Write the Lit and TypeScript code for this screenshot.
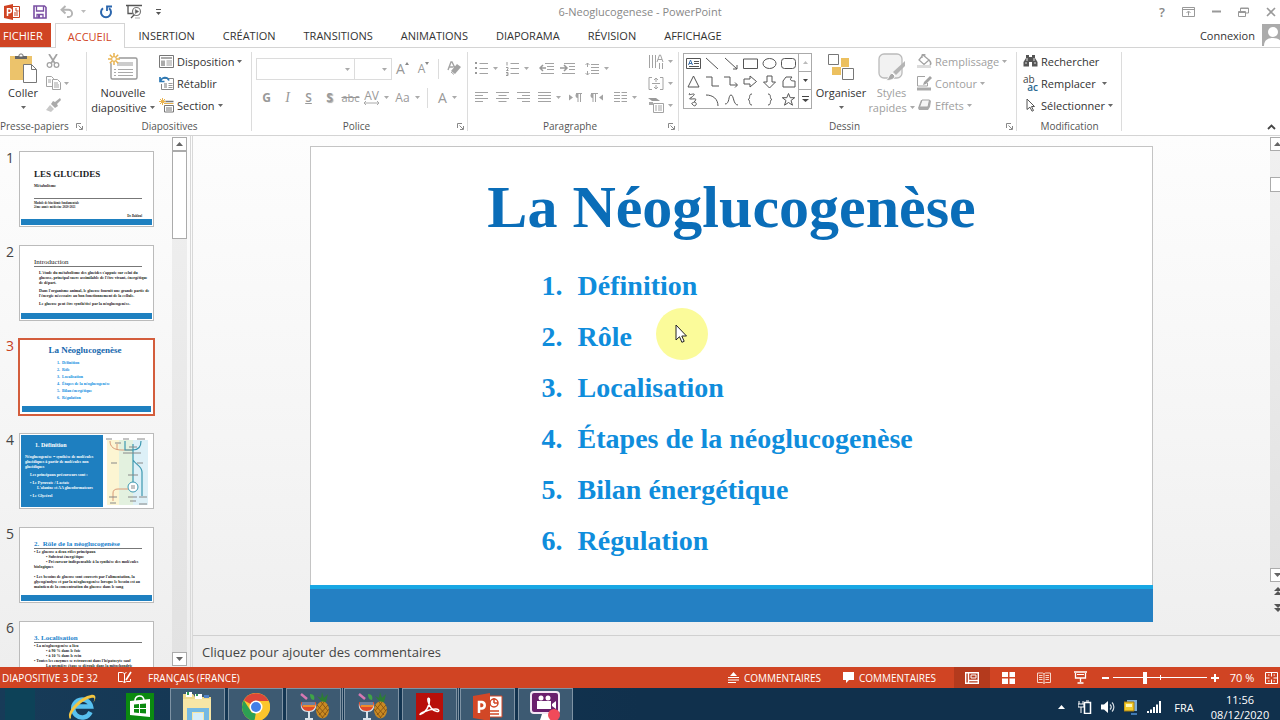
import { LitElement, html, css, svg, TemplateResult, SVGTemplateResult } from "lit";
import { customElement, state } from "lit/decorators.js";
import { classMap } from "lit/directives/class-map.js";

const icon = (w: number, h: number, body: SVGTemplateResult) =>
  html`<svg width=${w} height=${h} viewBox="0 0 ${w} ${h}" fill="none" aria-hidden="true">${body}</svg>`;

const caret = (c = "#666") => icon(5, 3, svg`<path d="M0 0h5L2.500 3z" fill=${c} />`);
const launcher = icon(7, 7, svg`<path d="M.5 5V.5H5M2.500 2.500L6 6M6.500 3v3.500H3" stroke="#888" />`);

const G = "#a3a3a3";

const I = {
  ppt: icon(16, 16, svg`<path d="M8 2.500h7.500v11H8z" fill="#fff" stroke="#c8411f" /><path d="M10 9h4M10 11h4M12 4v3h2.500" stroke="#c8411f" /><path d="M0 2l9-2v16l-9-2z" fill="#d04423" /><path d="M3.500 12V4.800h1.800a1.900 1.900 0 010 4H3.500" stroke="#fff" stroke-width="1.500" />`),
  save: icon(14, 14, svg`<path d="M1 1h10.500L13 2.500V13H1z" stroke="#7a4fa3" stroke-width="1.600" /><path d="M3.500 1v5h7V1M4 13V9.500h6V13" stroke="#7a4fa3" stroke-width="1.300" /><path d="M5 10h2v3H5z" fill="#7a4fa3" />`),
  undo: icon(14, 13, svg`<path d="M5.500 1L1.500 4.800l4 3.700M2 4.800h6.500a3.600 3.600 0 010 7.200H7" stroke="#b4b4b4" stroke-width="1.900" />`),
  redo: icon(14, 14, svg`<path d="M4 3.200A5 5 0 1 0 10 3.200" stroke="#2b66ad" stroke-width="2" /><path d="M8 6V1.500h5" stroke="#2b66ad" stroke-width="1.800" />`),
  show: icon(17, 15, svg`<path d="M0 1.500h16M2 2v7.500h5M5 14l3-3M8 10v2" stroke="#555" stroke-width="1.300" /><circle cx="10.500" cy="7.500" r="4" fill="#fff" stroke="#777" stroke-width="1.200" /><path d="M9.300 5.500l3.400 2-3.400 2zM9 14h5" fill="#555" stroke="#777" stroke-width=".6" />`),
  more: icon(5, 6, svg`<path d="M0 .5h5" stroke="#555" /><path d="M0 3h5L2.500 6z" fill="#555" />`),
  ribbonOpts: icon(13, 10, svg`<path d="M.5.5h12v9H.5zM.5 2.500h12M6.500 8.500V4.500M4.500 6l2-2 2 2" stroke="#999" />`),
  min: icon(9, 3, svg`<path d="M0 1.500h9" stroke="#999" stroke-width="2" />`),
  restore: icon(11, 10, svg`<path d="M.5 4.500h7v5h-7zM2.500 4V1h8v5H8M.5 5.500h7M2.500 1.500h8" stroke="#999" />`),
  close: icon(10, 10, svg`<path d="M1 1l8 8M9 1L1 9" stroke="#999" stroke-width="1.600" />`),
  user: icon(18, 22, svg`<path d="M0 0h18v22H0z" fill="#ababab" /><circle cx="11" cy="8" r="5" fill="#fff" /><path d="M2 22c0-6 4-8 9-8s9 2 9 8z" fill="#fff" />`),
  paste: icon(28, 30, svg`<path d="M1 3h22v24H1z" fill="#ecc36b" /><path d="M6 6V3h3.500a2.500 2.500 0 015 0H18v3z" fill="#666" /><path d="M10.500 1.500h3v2h-3z" fill="#fff" /><path d="M14.500 11.500h8l5 5v13h-13zM22.500 11.500v5h5" fill="#fff" stroke="#777" />`),
  cut: icon(14, 14, svg`<path d="M3 0l6 9.500M11 0L5 9.500" stroke=${G} stroke-width="1.700" /><circle cx="3.500" cy="11" r="2.300" stroke=${G} stroke-width="1.300" /><circle cx="10.500" cy="11" r="2.300" stroke=${G} stroke-width="1.300" />`),
  copy: icon(15, 14, svg`<path d="M.5.5h5l2 2v8h-7z" stroke=${G} /><path d="M6.500 3.500h5l3 3v7h-8zM8 7h4M8 9h5M8 11h5M2 4h3M2 6h3" fill="#fff" stroke=${G} />`),
  brush: icon(15, 14, svg`<path d="M14 0l-5 4-2-1-2 3 4 4 3-2-1-2 4-4z" fill="#aaa" /><path d="M4 7l4 4-3 3-5-2z" fill="#c8c8c8" />`),
  newSlide: icon(30, 28, svg`<rect x="3" y="5" width="26" height="21" rx="1.500" fill="#fff" stroke="#999" stroke-width="1.400" /><path d="M9 9h16v4H9z" fill="#ccc" /><path d="M6 16.500h2M10 16.500h15M6 19.500h2M10 19.500h15M6 22.500h2M10 22.500h15" stroke="#aaa" /><circle cx="6" cy="6" r="5" fill="#fff" /><path d="M6 0v12M0 6h12M1.800 1.800l8.400 8.400M10.200 1.800l-8.400 8.400" stroke="#e9b24d" stroke-width="1.500" /><circle cx="6" cy="6" r="2.300" fill="#fff" stroke="#e9b24d" />`),
  layout: icon(15, 13, svg`<path d="M.5.5h14v12H.5z" stroke="#777" /><path d="M2 2h11v2H2zM2 5.500h4v5.500H2z" fill="#aaa" /><path d="M7.500 6h5.500M7.500 8h5.500M7.500 10h5.500" stroke="#999" />`),
  reset: icon(15, 14, svg`<path d="M4 2.500h10.500v11H2.500V8" stroke="#888" /><path d="M5 7h3v5H5z" fill="#bbb" /><path d="M9.500 7.500h4M9.500 9.500h4M9.500 11.500h4" stroke="#999" /><path d="M1 1v4.500h4.500M1.500 5C3 1 8 0 10 4.500" stroke="#2b78b5" stroke-width="1.700" />`),
  section: icon(15, 15, svg`<path d="M5 3.500h9.500" stroke="#777" stroke-width="1.500" /><path d="M5 5.500h9.500" stroke="#e9b24d" /><path d="M5.500 7.500h9v6.500h-9zM7 10h6M7 12h6" stroke="#777" /><path d="M3.500 0v7M0 3.500h7M1 1l5 5M6 1L1 6" stroke="#e9b24d" />`),
  eraser: icon(14, 15, svg`<path d="M1 9L4 1h1l3 6M2.500 6h4" stroke=${G} stroke-width="1.400" /><path d="M10 3l4 3-6 7-4-3z" fill=${G} /><path d="M4 11l3 2.500" stroke=${G} />`),
  bullets: icon(13, 13, svg`<path d="M0 0h2v2H0zM0 5h2v2H0zM0 10h2v2H0z" fill="#999" /><path d="M4.500 1.500H13M4.500 6.500H13M4.500 11.500H13" stroke=${G} />`),
  numbering: icon(13, 14, svg`<path d="M1 0v3.500M0 5.500h2v1.500L.5 8.500h2M0 10.500h2v3H0M.5 12h1.500" stroke="#999" /><path d="M4.500 1.500H13M4.500 6.500H13M4.500 11.500H13" stroke=${G} />`),
  outdent: icon(15, 11, svg`<path d="M6 .5h9M8 3.500h7M8 6.500h7M2 10.500h13" stroke=${G} /><path d="M7 5H1M4 2L1 5l3 3" stroke="#999" stroke-width="1.500" />`),
  indent: icon(15, 11, svg`<path d="M4 .5h11M9 3.500h6M9 6.500h6M2 10.500h13" stroke=${G} /><path d="M0 5h6M4 2l3 3-3 3" stroke="#999" stroke-width="1.500" />`),
  spacing: icon(14, 14, svg`<path d="M2.500 1v4M.5 3l2-2 2 2M2.500 13V9M.5 11l2 2 2-2M6 2.500h8M6 5.500h8M6 8.500h8M6 11.500h8" stroke=${G} />`),
  left: icon(13, 11, svg`<path d="M0 .5h13M0 3.500h8M0 6.500h13M0 9.500h8" stroke=${G} />`),
  center: icon(13, 11, svg`<path d="M0 .5h13M2.500 3.500h8M0 6.500h13M2.500 9.500h8" stroke=${G} />`),
  right: icon(13, 11, svg`<path d="M0 .5h13M5 3.500h8M0 6.500h13M5 9.500h8" stroke=${G} />`),
  justify: icon(13, 11, svg`<path d="M0 .5h13M0 3.500h13M0 6.500h13M0 9.500h13" stroke=${G} />`),
  ltr: icon(13, 9, svg`<path d="M0 1.500L4 4.500 0 7.500z" fill=${G} /><path d="M9 0v9M11.500 0v9M7 .5h6" stroke=${G} /><path d="M9 0a2.500 2.500 0 000 5z" fill=${G} />`),
  rtl: icon(13, 9, svg`<path d="M13 1.500L9 4.500l4 3z" fill=${G} /><path d="M3 0v9M5.500 0v9M1 .5h7" stroke=${G} /><path d="M3 0a2.500 2.500 0 000 5z" fill=${G} />`),
  columns: icon(13, 11, svg`<path d="M0 .5h6M7.500 .5H13M0 3.500h6M7.500 3.500H13M0 6.500h6M7.500 6.500H13M0 9.500h6M7.500 9.500H13" stroke=${G} />`),
  textDir: icon(16, 15, svg`<path d="M1.500 1v13M4.500 1v13M7.500 1v13M11.500 9v6M14.500 9v6M9 8l2.500-7h1L15 8M10 5.500h4" stroke=${G} />`),
  alignText: icon(16, 15, svg`<path d="M4 1.500H1v12h3M12 1.500h3v12h-3M4 7.500h8M8 2v4M8 13V9M6 4l2-2 2 2M6 11l2 2 2-2" stroke=${G} />`),
  smartArt: icon(16, 16, svg`<path d="M0 1h8l4 3H4z" fill="#999" /><path d="M1 5h4v3H1z" fill="#aaa" /><path d="M5.500 6.500h10v9h-10zM7 9h2M10 9h4M7 11h2M10 11h4M7 13h2M10 13h4" fill="#fff" stroke=${G} />`),
  organise: icon(28, 28, svg`<path d="M14 5h8v9h-8zM5 14h9v8H5z" fill="#ecc05f" /><path d="M1.500 1.500h10v10h-10zM15.500 15.500h11v11h-11z" fill="#fff" stroke="#777" />`),
  styles: icon(28, 30, svg`<rect x="1" y="1" width="23" height="24" rx="5" fill="#f2f2f2" stroke="#bbb" stroke-width="1.300" /><path d="M27 8v5l-9 9-3-3z" fill="#b5b5b5" /><path d="M14 20l3 3c-1 4-6 5-9 4 3-1 2-5 6-7z" fill="#aaa" stroke="#fff" />`),
  fill: icon(15, 14, svg`<path d="M6 1l6 5-5 4.500L2 6zM5 4V1.500a1.500 1.500 0 013 0" stroke=${G} stroke-width="1.300" /><path d="M12 6c2 2 2 4 1 5" stroke=${G} stroke-width="1.500" /><path d="M0 11h14v3H0z" fill="#dcdcdc" />`),
  outline: icon(15, 15, svg`<path d="M8 .5H.5v9.500h10V7" stroke=${G} /><path d="M13 0l2 2-6 6-3 1 1-3z" fill=${G} /><path d="M0 11.500h14v3H0z" fill="#aaa" />`),
  effects: icon(15, 12, svg`<path d="M4 1h9l1 1-1 6-2 3H2L1 9z" fill="#aaa" /><path d="M5 1h7.500L11 8H2.500z" fill="#f5f5f5" stroke=${G} />`),
  find: icon(15, 12, svg`<path d="M3 0h3v2h3V0h3v3l2.500 4v4.500H9V7H6v4.500H.5V7L3 3z" fill="#555" /><path d="M2 8h2M11 8h2M4 3v3M11 3v3" stroke="#ddd" />`),
  select: icon(10, 14, svg`<path d="M1 1l7.500 7.500H5.500l2 4-1.500.7-2-4L1 11.500z" stroke="#555" />`),
  up: icon(9, 6, svg`<path d="M1 5l3.500-3.500L8 5" stroke="#444" stroke-width="1.800" />`),
  proof: icon(14, 13, svg`<path d="M.5 1.500h4l2 1v9l-2-1h-4zM6.500 2.500l2-1M6.500 11.500l2-1h4V8" stroke="#fff" /><path d="M13 1L8 9" stroke="#fff" stroke-width="1.600" />`),
  notes: icon(11, 11, svg`<path d="M0 5.500h11M0 8h11M0 10.500h8" stroke="#fff" /><path d="M2 4l3.500-4L9 4z" fill="#fff" />`),
  comment: icon(11, 11, svg`<path d="M0 0h11v8H6l-3 3V8H0z" fill="#fff" />`),
  normal: icon(14, 12, svg`<path d="M.7.7h12.600v10.600H.7zM3.500 1v10M4 8.500h9" stroke="#fff" stroke-width="1.400" /><path d="M6 3h5v3H6z" stroke="#fff" />`),
  sorter: icon(13, 12, svg`<path d="M0 0h6v5H0zM7.500 0h5.500v5H7.500zM0 6.500h6V12H0zM7.500 6.500h5.500V12H7.500z" fill="#fff" />`),
  reading: icon(14, 12, svg`<path d="M.5 1h5l1.500 1 1.500-1h5v9.500h-5L7 11.500l-1.500-1h-5zM7 2v9M2 3.500h3.500M2 5.500h3.500M2 7.500h3.500M8.500 3.500H12M8.500 5.500H12M8.500 7.500H12" stroke="#f5d5cb" />`),
  slideshow: icon(13, 13, svg`<path d="M0 1h13M1.500 2v5h10V2M6.500 7v4M3.500 12h6" stroke="#fff" stroke-width="1.300" /><path d="M3 3.500h7" stroke="#fff" />`),
  fit: icon(13, 12, svg`<path d="M.5.5h12v11H.5zM6.500 1v3.500M6.500 11V7.500M1 6h3.500M12 6H8.500" stroke="#fff" /><path d="M3 3h1.500M8.500 3H10M3 9h1.500M8.500 9H10" stroke="#fff" />`),
  ie: icon(30, 30, svg`<path d="M23.500 20a9 9 0 11.500-5.500H8" stroke="#58c1ef" stroke-width="4.500" /><path d="M3 27C-2 21 12 5 24 3c6-1 5 4 2 8 2-4 2-6-2-5C15 8 3 20 4 26z" fill="#f3c541" />`),
  store: icon(28, 28, svg`<path d="M0 0h28v28H0z" fill="#0b8a10" /><path d="M4 8l20-2v18L4 22z" fill="#fff" /><path d="M9 8c0-6 8-7 9-1" stroke="#fff" stroke-width="1.600" /><path d="M8 11.500l5-.5v4H8zM14 11l6-.5V15h-6zM8 16h5v4l-5-.5zM14 16h6v4.500l-6-.5z" fill="#0b8a10" />`),
  folder: icon(32, 32, svg`<path d="M1 3h10l2 3h16v24H1z" fill="#efd98c" /><path d="M4 1h6v5H4zM13 3h7v5h-7z" fill="#fff" /><path d="M5 1h2v3H5zM14 3h2v2h-2z" fill="#2d9b52" /><path d="M22 4h5v3h-5z" fill="#4f81c7" /><path d="M1 8h28v22H1z" fill="#f7e6a6" /><path d="M5 17h22v15h-5V21H10v11H5z" fill="#74b9e4" /><path d="M11 22h10v8H11z" fill="#d7eefa" />`),
  chrome: icon(28, 28, svg`<circle cx="14" cy="14" r="14" fill="#fbc62d" /><path d="M14 14L1.800 7.200A14 14 0 0126.500 8H14z" fill="#dd4638" /><path d="M1.800 7.200L10 20l4-1-1.500 9A14 14 0 011.800 7.200z" fill="#2da053" /><path d="M12 28l6-11 2-9h6.500A14 14 0 0112 28z" fill="#fbc62d" /><circle cx="14" cy="14" r="6.500" fill="#fff" /><circle cx="14" cy="14" r="5" fill="#437fe8" />`),
  fruit: icon(30, 30, svg`<path d="M2 11h15c1 6-2 9-6 9v6h3v2H6v-2h3v-6C4 20 1 17 2 11z" fill="#d9e3ea" /><path d="M2 10h15c0 6-3 9-7.500 9S2 16 2 10z" fill="#e0492a" /><path d="M3 10h13v4H3z" fill="#6f7f9c" /><path d="M4 13h12v2H4z" fill="#f08a2c" /><path d="M2 2l6 5" stroke="#d678b2" stroke-width="2.500" /><path d="M11 2c4 0 5 3 4 6-3 0-4-3-4-6z" fill="#3fa447" /><path d="M23 10l-5-6 4 2 1-6 2 6 4-4-2 8z" fill="#2c7d35" /><ellipse cx="23.500" cy="18" rx="6.500" ry="8.500" fill="#c98a22" /><path d="M18 13l9 10M17 17l7 9M22 10l7 9M29 13l-9 10M30 17l-7 9M25 10l-7 9" stroke="#7c4d12" stroke-width=".8" />`),
  acrobat: icon(27, 28, svg`<path d="M0 0h27v28H0z" fill="#b80f0a" /><path d="M5 21c4-1 9-8 8.500-14-.2-3-2.300-2-1.500 1 1.500 6 5 10 9 10.500 3 0 2-2.500-1-2.500-5 0-9 1.500-13.500 3.500C4 21 3 22 5 21z" stroke="#fff" stroke-width="1.500" />`),
  pptBig: icon(30, 28, svg`<path d="M14 3h15v21H14z" fill="#fff" stroke="#d24726" /><circle cx="21" cy="10" r="4" stroke="#d24726" stroke-width="1.500" /><path d="M21 10V5M21 10h4M17 18h9M17 21h9" stroke="#d24726" stroke-width="1.500" /><path d="M0 3l17-3v28L0 25z" fill="#d24726" /><path d="M6 20V9h3a3.300 3.300 0 010 6.500H6" stroke="#fff" stroke-width="2.500" />`),
  recorder: icon(32, 32, svg`<rect x="1" y="1" width="28" height="21" rx="3" fill="#6a1f6d" stroke="#f3e6f4" stroke-width="2" /><circle cx="11" cy="7" r="2.500" fill="#fff" /><circle cx="18" cy="7" r="2.500" fill="#fff" /><path d="M7 10h14v8H7zM22 13l4-3v8l-4-3zM12 23h7l2 6H10z" fill="#fff" /><circle cx="24" cy="24" r="6" fill="#f04a5a" />`),
  trayUp: icon(7, 4, svg`<path d="M0 4h7L3.500 0z" fill="#fff" />`),
  battery: icon(14, 14, svg`<path d="M6.500 2.500h6v11h-6z" stroke="#fff" stroke-width="1.500" /><path d="M8 1h3M1 1v3M5 1v3M0 4h6v3H0zM3 7v6" stroke="#fff" />`),
  speaker: icon(14, 14, svg`<path d="M0 4.500h3L7 1v12L3 9.500H0z" fill="#fff" /><path d="M9 4.500c1.500 1.500 1.500 3.500 0 5M11 2.500c2.500 2.500 2.500 6.500 0 9" stroke="#d5dde5" stroke-width="1.200" />`),
  usb: icon(14, 15, svg`<path d="M3 0h10v11H3z" fill="#7eaed8" /><path d="M0 2h10v9H0z" fill="#f2cb2a" stroke="#a87d0e" /><path d="M2 4h6v3H2z" fill="#fff7b8" /><path d="M7 14h6" stroke="#4f92d6" stroke-width="1.500" />`),
  signal: icon(14, 12, svg`<path d="M1 10v2M4 8.500V12M7 6v6M10 3.500V12M13 0v12" stroke="#fff" stroke-width="2" />`),
};

const shapes: SVGTemplateResult[] = [
  svg`<path d="M.5 2.500h14v10H.5zM8 5.500h5M8 7.500h5M3 10.500h10" /><path d="M2.500 9l2-5 2 5M3 7.500h3" stroke="#3a6ea8" />`,
  svg`<path d="M1 2l12 11" />`,
  svg`<path d="M1 2l12 11M13 9v4H9" />`,
  svg`<path d="M.5 3h14v9.500H.5z" />`,
  svg`<ellipse cx="7.500" cy="7.500" rx="6.500" ry="5" />`,
  svg`<rect x=".5" y="2.500" width="14" height="10" rx="3" />`,
  svg`<path d="M7.500 2l5.500 11H2z" />`,
  svg`<path d="M1 3h6v9h7" />`,
  svg`<path d="M0 3h6v8h7M11 8.500l2.500 2.500L11 13.500" />`,
  svg`<path d="M1 5h6V2l6.500 5.500L7 13v-3H1z" />`,
  svg`<path d="M5 2h5v6h3.500l-6 6-6-6H5z" />`,
  svg`<path d="M5 3h6c-4 4 1 4 3 4v6H2V7z" />`,
  svg`<path d="M4 1c-4 4 6-1 4 2s-7 4-3 4 6-1 4 2-5 1-2 4 5-3 1-3" />`,
  svg`<path d="M1 3c7 0 12 4 12 11" />`,
  svg`<path d="M1 12c5 0 3-9 6-9s2 10 7 10" />`,
  svg`<path d="M9 2c-4 0-1 5-4 5.500C8 8 5 13 9 13" />`,
  svg`<path d="M6 2c4 0 1 5 4 5.500C7 8 10 13 6 13" />`,
  svg`<path d="M7.500 1.500l1.700 4.200h4.500L10 8.500l1.500 4.700-4-2.700-4 2.700L5 8.500 1.300 5.700h4.500z" />`,
];

const base = css`
  button, select, input { font: inherit; color: inherit; border: 0; padding: 0; margin: 0; background: none; }
  button { display: inline-flex; align-items: center; justify-content: center; white-space: nowrap; }
  svg { display: block; flex: none; }
`;

@customElement("ppt-ribbon")
class PptRibbon extends LitElement {
  static styles = [base, css`
    :host { display: flex; height: 88px; background: #fff; border-bottom: 1px solid #d4d4d4; box-sizing: border-box; font-size: 11px; color: #333; }
    .group { display: flex; flex-direction: column; box-sizing: border-box; flex: none; padding-top: 2px; position: relative; }
    .group::after { content: ""; position: absolute; right: 0; top: 4px; bottom: 4px; border-right: 1px solid #dcdcdc; }
    .clip { width: 87px; } .slides { width: 165px; } .font { width: 216px; } .para { width: 211px; } .draw { width: 338px; } .edit { width: 105px; }
    .body { display: flex; height: 68px; box-sizing: border-box; }
    .foot { display: grid; grid-template-columns: 1fr auto; align-items: center; height: 16px; padding: 0 4px; font-size: 10px; color: #555; }
    .foot span { text-align: center; white-space: nowrap; }
    .clip .foot { padding-left: 0; } .clip .foot span { text-align: left; }
    .stack { display: flex; flex-direction: column; }
    .stack button { height: 22px; gap: 3px; justify-content: flex-start; }
    .big { flex: none; flex-direction: column; justify-content: flex-start; gap: 0; padding-top: 3px; line-height: 15px; }
    .big .pic { height: 32px; display: flex; align-items: flex-start; }
    .big .arrow { height: 15px; display: flex; align-items: center; }
    .big .inline { display: flex; align-items: center; gap: 3px; }
    .off { color: #a0a0a0; }
    .coller { width: 46px; } .nouvelle { width: 72px; }
    .rows { display: flex; flex-direction: column; padding-top: 4px; }
    .row { display: flex; align-items: center; height: 29px; color: #999; font-size: 12px; }
    .row button { height: 22px; gap: 5px; }
    .b { width: 21px; } .w { width: 31px; }
    .combo { position: relative; display: flex; height: 22px; border: 1px solid #dcdcdc; box-sizing: border-box; }
    .combo svg { position: absolute; right: 4px; top: 9px; }
    .combo select { width: 100%; appearance: none; }
    .face { width: 99px; } .size { width: 38px; margin-left: -1px; }
    .font .rows { padding-left: 4px; }
    .sep { width: 1px; height: 20px; background: #dcdcdc; margin: 0 4px; }
    .bold { font-weight: 700; } .ital { font-style: italic; font-family: "Liberation Serif", serif; font-size: 14px; }
    .under { text-decoration: underline; font-weight: 600; } .shade { font-weight: 700; text-shadow: 1px 1px 1px #aaa; }
    .row .strike { text-decoration: line-through; font-size: 11px; } .track { flex-direction: column; gap: 0; line-height: 11px; display: flex; align-items: center; }
    .grow { font-size: 14px; } .row .sup { gap: 0; align-items: flex-start; line-height: 22px; } .sup svg { margin-top: 4px; }
    .para .rows { padding-left: 3px; width: 174px; }
    .gap { width: 3px; }
    .para .stack { padding-left: 3px; } .para .stack button { gap: 4px; }
    .draw .body { padding-left: 4px; }
    .gallery { display: grid; grid-template-columns: 1fr 13px; width: 129px; height: 56px; margin-top: 3px; border: 1px solid #aaa; box-sizing: border-box; flex: none; }
    .shapes { display: grid; grid-template-columns: repeat(6, 19px); grid-auto-rows: 18px; }
    .shapes svg { stroke: #555; }
    .nav { display: grid; grid-template-rows: repeat(3, 18px); border-left: 1px solid #aaa; }
    .nav button { border-bottom: 1px solid #aaa; }
    .nav button:last-child { border-bottom: 0; }
    .organiser { width: 58px; } .quick { width: 43px; margin-right: 4px; }
    .edit .stack { padding-left: 6px; }
    .abac { width: 15px; font-size: 10px; line-height: 8px; text-align: left; color: #444; }
    .abac b { display: block; font-weight: 600; color: #2b6a93; text-align: right; }
    .mouse { width: 15px; display: flex; justify-content: center; }
    .end { flex: 1; display: flex; justify-content: flex-end; align-items: flex-end; padding: 0 4px 5px 0; }
  `];

  private b(content: unknown, label: string, cls = "b", arrow = false) {
    return html`<button class=${cls} aria-label=${label}>${content}${arrow ? caret("#aaa") : ""}</button>`;
  }

  render() {
    return html`
      <section class="group clip">
        <div class="body">
          <button class="big coller"><span class="pic">${I.paste}</span><span>Coller</span><span class="arrow">${caret()}</span></button>
          <div class="stack">
            ${this.b(I.cut, "Couper", "s")}${this.b(I.copy, "Copier", "s", true)}${this.b(I.brush, "Reproduire", "s")}
          </div>
        </div>
        <div class="foot"><span>Presse-papiers</span>${launcher}</div>
      </section>
      <section class="group slides">
        <div class="body">
          <button class="big nouvelle"><span class="pic">${I.newSlide}</span><span>Nouvelle</span><span class="inline">diapositive ${caret()}</span></button>
          <div class="stack">
            <button>${I.layout}Disposition ${caret()}</button>
            <button>${I.reset}Rétablir</button>
            <button>${I.section}Section ${caret()}</button>
          </div>
        </div>
        <div class="foot"><span>Diapositives</span></div>
      </section>
      <section class="group font">
        <div class="body rows">
          <div class="row">
            <div class="combo face"><select aria-label="Police"><option></option></select>${caret("#aaa")}</div>
            <div class="combo size"><select aria-label="Taille"><option></option></select>${caret("#aaa")}</div>
            <button class="b sup grow" aria-label="Agrandir">A${icon(4, 3, svg`<path d="M0 3h4L2 0z" fill="#888" />`)}</button>
            <button class="b sup" aria-label="Réduire">A${icon(4, 3, svg`<path d="M0 0h4L2 3z" fill="#888" />`)}</button>
            <span class="sep"></span>${this.b(I.eraser, "Effacer")}
          </div>
          <div class="row">
            ${this.b("G", "Gras", "b bold")}${this.b("I", "Italique", "b ital")}${this.b("S", "Souligné", "b under")}${this.b("S", "Ombre", "b shade")}${this.b("abc", "Barré", "b strike")}
            <button class="w" aria-label="Espacement"><span class="track">AV${icon(15, 4, svg`<path d="M0 2h15M2 0L0 2l2 2M13 0l2 2-2 2" stroke="#aaa" />`)}</span>${caret("#aaa")}</button>
            ${this.b("Aa", "Casse", "w", true)}<span class="sep"></span>${this.b(html`<span class="grow">A</span>`, "Couleur", "w", true)}
          </div>
        </div>
        <div class="foot"><span>Police</span>${launcher}</div>
      </section>
      <section class="group para">
        <div class="body">
          <div class="rows">
            <div class="row">
              ${this.b(I.bullets, "Puces", "w", true)}${this.b(I.numbering, "Numérotation", "w", true)}<span class="gap"></span>${this.b(I.outdent, "Réduire le retrait")}${this.b(I.indent, "Augmenter le retrait")}<span class="gap"></span>${this.b(I.spacing, "Interligne", "w", true)}
            </div>
            <div class="row">
              ${this.b(I.left, "Gauche")}${this.b(I.center, "Centre")}${this.b(I.right, "Droite")}${this.b(I.justify, "Justifier", "w", true)}${this.b(I.ltr, "De gauche à droite")}${this.b(I.rtl, "De droite à gauche")}<span class="gap"></span>${this.b(I.columns, "Colonnes", "w", true)}
            </div>
          </div>
          <div class="stack">
            ${this.b(I.textDir, "Orientation", "s", true)}${this.b(I.alignText, "Aligner", "s", true)}${this.b(I.smartArt, "SmartArt", "s", true)}
          </div>
        </div>
        <div class="foot"><span>Paragraphe</span>${launcher}</div>
      </section>
      <section class="group draw">
        <div class="body">
          <div class="gallery">
            <div class="shapes">${shapes.map((s) => html`<button aria-label="Forme">${icon(15, 15, s)}</button>`)}</div>
            <div class="nav">
              <button aria-label="Haut">${icon(5, 3, svg`<path d="M0 3h5L2.500 0z" fill="#bbb" />`)}</button>
              <button aria-label="Bas">${caret("#444")}</button>
              <button aria-label="Autres">${icon(7, 6, svg`<path d="M0 .5h7" stroke="#444" /><path d="M0 3h7L3.500 6z" fill="#444" />`)}</button>
            </div>
          </div>
          <button class="big organiser"><span class="pic">${I.organise}</span><span>Organiser</span><span class="arrow">${caret()}</span></button>
          <button class="big quick off"><span class="pic">${I.styles}</span><span>Styles</span><span class="inline">rapides ${caret("#aaa")}</span></button>
          <div class="stack off">
            <button>${I.fill}Remplissage ${caret("#aaa")}</button>
            <button>${I.outline}Contour ${caret("#aaa")}</button>
            <button>${I.effects}Effets ${caret("#aaa")}</button>
          </div>
        </div>
        <div class="foot"><span>Dessin</span>${launcher}</div>
      </section>
      <section class="group edit">
        <div class="body">
          <div class="stack">
            <button>${I.find}Rechercher</button>
            <button><span class="abac">ab<b>ac</b></span>Remplacer&nbsp; ${caret()}</button>
            <button><span class="mouse">${I.select}</span>Sélectionner ${caret()}</button>
          </div>
        </div>
        <div class="foot"><span>Modification</span></div>
      </section>
      <div class="end"><button aria-label="Réduire le ruban">${I.up}</button></div>
    `;
  }
}

@customElement("ppt-scrollbar")
class PptScrollbar extends LitElement {
  static properties = { extra: { type: Boolean }, lead: { type: Number }, size: { type: Number } };
  declare extra: boolean; declare lead: number; declare size: number;
  static styles = [base, css`
    :host { display: flex; flex-direction: column; width: 15px; flex: none; }
    button { height: 14px; flex: none; background: #fff; border: 1px solid #ababab; }
    .track { flex: 1; background: linear-gradient(#f0f0f0, #e2e2e2); }
    .thumb { background: #fff; border: 1px solid #ababab; box-sizing: border-box; }
    .jump { border: 0; background: none; height: 17px; }
  `];
  render() {
    return html`
      <button aria-label="Vers le haut">${icon(7, 4, svg`<path d="M0 4h7L3.500 0z" fill="#666" />`)}</button>
      <div class="track"><div style="height:${this.lead}px"></div><div class="thumb" style="height:${this.size}px"></div></div>
      <button aria-label="Vers le bas">${icon(7, 4, svg`<path d="M0 0h7L3.500 4z" fill="#666" />`)}</button>
      ${this.extra ? html`
        <button class="jump" aria-label="Diapositive précédente">${icon(8, 8, svg`<path d="M0 4h8L4 0zM0 8h8L4 4z" fill="#555" />`)}</button>
        <button class="jump" aria-label="Diapositive suivante">${icon(8, 8, svg`<path d="M0 0h8L4 4zM0 4h8L4 8z" fill="#555" />`)}</button>` : ""}
    `;
  }
}

@customElement("ppt-thumbs")
class PptThumbs extends LitElement {
  @state() selected = 3;
  static styles = [base, css`
    :host { display: block; width: 172px; overflow: hidden; flex: none; }
    .list { display: flex; flex-direction: column; gap: 16px; padding-top: 14px; }
    .item { display: flex; align-items: flex-start; gap: 2px; height: 78px; padding-left: 4px; }
    .num { width: 12px; text-align: center; font-size: 14px; line-height: 16px; color: #444; }
    .on .num { color: #c8411f; }
    .frame { display: block; width: 137px; height: 78px; box-sizing: border-box; padding: 1px; }
    .on .frame { background: #d35d3c; padding: 2px; }
    .page { width: 100%; height: 100%; box-sizing: border-box; background: #fff; border: 1px solid #bbb; display: flex; flex-direction: column; text-align: left; font: 700 4px/5px "Liberation Serif", serif; color: #222; padding: 1px; white-space: normal; overflow: hidden; }
    .on .page { border-color: #fff; }
    .main { flex: 1; padding: 0 10px 0 13px; overflow: hidden; }
    .bar { height: 6px; background: #1e80c0; flex: none; }
    .t1 { font-size: 9px; line-height: 10px; margin-top: 16px; white-space: nowrap; } .sub { margin-top: 4px; }
    .rule { border-top: 1px solid #777; margin: 10px 0 2px; }
    .tiny { font-size: 3px; line-height: 4px; } .by { text-align: right; margin-top: 5px; font-size: 3px; line-height: 4px; }
    .h { font-size: 7px; line-height: 8px; margin-top: 11px; border-bottom: 1px solid #777; white-space: nowrap; }
    .plain { font-weight: 400; }
    .blue { color: #1c82cc; }
    p { margin: 3px -8px 0 5px; } .in { margin: 0 -8px 0 12px; } .flat { margin: 0 -8px 0 0; }
    .c { text-align: center; font-size: 9px; line-height: 10px; margin: 3px 0 0 -6px; color: #1668ae; white-space: nowrap; }
    .toc { font-size: 4px; line-height: 7px; color: #0a8ce0; padding: 4px 0 0 22px; }
    .split { display: flex; flex: 1; }
    .left { width: 82px; box-sizing: border-box; background: #1e7fc0; color: #fff; padding: 6px 4px; }
    .left .lt { font-size: 6px; margin: 2px 0 6px 10px; }
    .left p { margin-right: 0; }
    .right { flex: 1; }
  `];

  private page(n: number): TemplateResult {
    const bar = html`<div class="bar"></div>`;
    switch (n) {
      case 1: return html`<div class="main"><div class="t1">LES GLUCIDES</div><div class="sub">Métabolisme</div><div class="rule"></div><div class="tiny">Module de biochimie fondamentale<br>2ème année médecine 2020-2021</div><div class="by">Dr. Bahloul</div></div>${bar}`;
      case 2: return html`<div class="main"><div class="h plain">Introduction</div><p>L'étude du métabolisme des glucides s'appuie sur celui du glucose, principal sucre assimilable de l'être vivant, énergétique de départ.</p><p>Dans l'organisme animal, le glucose fournit une grande partie de l'énergie nécessaire au bon fonctionnement de la cellule.</p><p>Le glucose peut être synthétisé par la néoglucogenèse.</p></div>${bar}`;
      case 3: return html`<div class="main"><div class="c">La Néoglucogenèse</div><div class="toc">1. &nbsp;Définition<br>2. &nbsp;Rôle<br>3. &nbsp;Localisation<br>4. &nbsp;Étapes de la néoglucogenèse<br>5. &nbsp;Bilan énergétique<br>6. &nbsp;Régulation</div></div>${bar}`;
      case 4: return html`<div class="split"><div class="left"><div class="lt">1. Définition</div>Néoglucogenèse = synthèse de molécules glucidiques à partir de molécules non glucidiques<p>Les principaux précurseurs sont :</p><p>• Le Pyruvate / Lactate</p><p class="in">L'alanine et AA glucoformateurs</p><p>• Le Glycérol</p></div>
        <div class="right">${icon(49, 72, svg`<path d="M4 5h12v65H4z" fill="#fcf5d2" /><path d="M16 5h14v65H16z" fill="#e3f1df" /><path d="M30 5h15v65H30z" fill="#ddf0f7" /><path d="M7 6c0 6 4 9 12 9h11M14 9v6" stroke="#d99a78" /><path d="M22 6v9h8M38 6c0 6-3 9-8 9M30 9v39M30 25c3 5 9 6 9 12v24" stroke="#3c98b0" stroke-width="1.200" /><circle cx="30" cy="52" r="5" fill="#fff" stroke="#3c98b0" /><path d="M25 54H15q-5 0-5 4v8" stroke="#d99a78" /><path d="M3 4h6M12 8h6M20 4h6M34 4h8M26 12h8M20 18h18M8 28h6M34 28h6M25 40h10M6 62h8M25 62h9M36 62h8M7 68h6M27 66h6M36 69h8M28 51h4M28 53h4" stroke="#888" />`)}</div></div>`;
      case 5: return html`<div class="main"><div class="h blue">2. &nbsp;Rôle de la néoglucogenèse</div><p class="flat">• Le glucose a deux rôles principaux</p><p class="in">• Substrat énergétique</p><p class="in">• Précurseur indispensable à la synthèse des molécules</p><p class="flat">biologiques</p><p class="flat">&nbsp;</p><p class="flat">• Les besoins de glucose sont couverts par l'alimentation, la glycogénolyse et par la néoglucogenèse lorsque le besoin est au maintien de la concentration du glucose dans le sang</p></div>${bar}`;
      default: return html`<div class="main"><div class="h blue">3. Localisation</div><p class="flat">• La néoglucogenèse a lieu</p><p class="in">• à 90 % dans le foie</p><p class="in">• à 10 % dans le rein</p><p class="flat">• Toutes les enzymes se retrouvent dans l'hépatocyte sauf</p><p class="in">La première étape se déroule dans la mitochondrie</p></div>${bar}`;
    }
  }

  render() {
    return html`<div class="list">${[1, 2, 3, 4, 5, 6].map((n) => html`
      <div class=${classMap({ item: true, on: n === this.selected })}>
        <span class="num">${n}</span>
        <button class="frame" aria-label="Diapositive ${n}" @click=${() => (this.selected = n)}><div class="page">${this.page(n)}</div></button>
      </div>`)}</div>`;
  }
}

@customElement("desktop-taskbar")
class DesktopTaskbar extends LitElement {
  static styles = [base, css`
    :host { display: flex; height: 32px; background: linear-gradient(90deg, #173b58, #10304c 50%, #10304c); overflow: hidden; color: #fff; font-size: 11px; }
    .home { width: 30px; height: 38px; margin: 0 19px 0 5px; background: #0d4258; flex: none; }
    .apps { display: flex; gap: 3px; }
    .apps button { width: 55px; height: 38px; box-sizing: border-box; }
    .open { background: #3d5a72; border: 1px solid #7f93a4; }
    .multi { box-shadow: 1px 0 #29475f, 2px 0 #7f93a4; }
    .tray { margin-left: auto; display: flex; align-items: center; height: 38px; padding-right: 7px; }
    .icons { display: flex; align-items: center; gap: 9px; }
    .up { padding-right: 4px; }
    .lang { width: 46px; text-align: center; }
    .clock { width: 66px; text-align: center; line-height: 15px; }
  `];
  render() {
    const apps: [TemplateResult, string, string][] = [
      [I.ie, "Internet Explorer", ""], [I.store, "Store", ""], [I.folder, "Explorateur", "open"], [I.chrome, "Chrome", "open"],
      [I.fruit, "Jeu", "open multi"], [I.fruit, "Jeu 2", "open"], [I.acrobat, "Acrobat", "open multi"], [I.pptBig, "PowerPoint", "open"], [I.recorder, "Enregistreur", "open"],
    ];
    return html`
      <button class="home" aria-label="Démarrer"></button>
      <div class="apps">${apps.map(([i, l, c]) => html`<button class=${c} aria-label=${l}>${i}</button>`)}</div>
      <div class="tray"><div class="icons"><span class="up">${I.trayUp}</span>${I.battery}${I.speaker}${I.usb}${I.signal}</div><span class="lang">FRA</span><time class="clock">11:56<br>08/12/2020</time></div>`;
  }
}

@customElement("app-root")
class AppRoot extends LitElement {
  @state() zoom = 70;
  static styles = [base, css`
    :host { display: flex; flex-direction: column; height: 100vh; overflow: hidden; background: #fff; font-family: "Open Sans", "Noto Sans", sans-serif; font-size: 11px; color: #333; }
    .title { display: grid; grid-template-columns: 1fr auto 1fr; align-items: center; height: 23px; color: #888; }
    .quick { display: flex; align-items: center; gap: 13px; padding-left: 4px; }
    .undo { gap: 7px; }
    .win { display: flex; align-items: center; justify-content: flex-end; gap: 17px; padding-right: 4px; font-size: 13px; font-weight: 600; }
    .tabs { display: flex; height: 24px; border-bottom: 1px solid #d4d4d4; align-items: stretch; }
    .tabs button { padding: 0 14px; }
    .tabs .file { background: #d04423; color: #fff; padding: 0 8px 0 3px; margin-right: 4px; }
    .tabs .on { color: #d04423; border: 1px solid #d4d4d4; border-bottom: 0; background: #fff; margin-bottom: -1px; padding: 0 12px; }
    .tabs .sign { margin-left: auto; gap: 7px; padding: 0; }
    .work { flex: 1; display: flex; min-height: 0; background: linear-gradient(#fdfdfd, #f6f6f6 50%, #eeeeee); }
    .thumbs { display: flex; padding-right: 3px; }
    .thumbs ppt-scrollbar { margin: 1px 0; }
    .split { width: 3px; box-sizing: border-box; border: solid #d8d8d8; border-width: 0 1px; flex: none; }
    .main { flex: 1; min-width: 0; display: flex; flex-direction: column; }
    .edit { flex: 1; min-height: 0; display: flex; }
    .canvas { flex: 1; display: flex; justify-content: center; padding: 10px 0 13px; min-width: 0; }
    .edit ppt-scrollbar { margin: 1px -5px 19px 0; }
    .slide { position: relative; height: 100%; aspect-ratio: 39 / 22; box-sizing: border-box; background: #fff; border: 1px solid #c4c4c4; display: flex; flex-direction: column; font-family: "Liberation Serif", serif; font-weight: 700; }
    h1 { margin: 24px 0 17px; text-align: center; font-size: 60px; line-height: 72px; color: #0a6db8; white-space: nowrap; }
    ol { list-style: none; margin: 0; padding: 0 0 0 231px; font-size: 28px; line-height: 51px; color: #0f8ddc; flex: 1; min-height: 0; }
    li { display: grid; grid-template-columns: 36px 1fr; white-space: nowrap; }
    .band { height: 37px; box-sizing: border-box; background: #2480c3; border-top: 4px solid #18a7e4; margin: 0 -1px -1px; flex: none; }
    .halo { position: absolute; left: 41%; top: 34%; width: 52px; height: 52px; border-radius: 50%; background: #fbfb9a; display: flex; align-items: center; justify-content: center; }
    .notes { height: 32px; box-sizing: border-box; border-top: 1px solid #d0d0d0; background: #eeeeee; padding: 0 9px; display: flex; }
    .notes input { flex: 1; font-size: 13px; outline: 0; }
    .notes input::placeholder { color: #444; opacity: 1; }
    .status { height: 21px; display: flex; align-items: center; background: #d04423; color: #fff; font-size: 10px; font-weight: 500; }
    .status button { height: 21px; gap: 5px; }
    .where { padding-left: 2px; margin-right: 20px; } .lang { margin-left: 16px; }
    .right { margin-left: auto; display: flex; align-items: center; padding-right: 2px; }
    .coms { display: flex; gap: 22px; margin-right: 18px; }
    .view { width: 36px; } .view.on { background: #b43a1d; }
    .slider { display: flex; align-items: center; gap: 4px; margin-left: 4px; }
    input[type="range"] { appearance: none; width: 94px; height: 12px; background: linear-gradient(#fff, #fff) center / 100% 1px no-repeat, linear-gradient(#fff, #fff) center / 1px 5px no-repeat; }
    input[type="range"]::-webkit-slider-thumb { appearance: none; width: 4px; height: 12px; background: #fff; }
    .pct { width: 46px; text-align: center; font-size: 11px; }
  `];

  render() {
    return html`
      <header class="title">
        <div class="quick">
          ${I.ppt}<button aria-label="Enregistrer">${I.save}</button><button class="undo" aria-label="Annuler">${I.undo}${caret("#bbb")}</button>
          <button aria-label="Rétablir">${I.redo}</button><button aria-label="Diaporama">${I.show}</button><button aria-label="Personnaliser">${I.more}</button>
        </div>
        <span>6-Neoglucogenese - PowerPoint</span>
        <div class="win"><button aria-label="Aide">?</button><button aria-label="Options du ruban">${I.ribbonOpts}</button><button aria-label="Réduire">${I.min}</button><button aria-label="Restaurer">${I.restore}</button><button aria-label="Fermer">${I.close}</button></div>
      </header>
      <nav class="tabs">
        <button class="file">FICHIER</button><button class="on">ACCUEIL</button>
        ${["INSERTION", "CRÉATION", "TRANSITIONS", "ANIMATIONS", "DIAPORAMA", "RÉVISION", "AFFICHAGE"].map((t) => html`<button>${t}</button>`)}
        <button class="sign">Connexion${I.user}</button>
      </nav>
      <ppt-ribbon></ppt-ribbon>
      <div class="work">
        <aside class="thumbs"><ppt-thumbs></ppt-thumbs><ppt-scrollbar .lead=${0} .size=${88}></ppt-scrollbar></aside>
        <div class="split"></div>
        <main class="main">
          <div class="edit">
            <div class="canvas">
              <article class="slide">
                <h1>La Néoglucogenèse</h1>
                <ol>${["Définition", "Rôle", "Localisation", "Étapes de la néoglucogenèse", "Bilan énergétique", "Régulation"].map((t, i) => html`<li><span>${i + 1}.</span><span>${t}</span></li>`)}</ol>
                <div class="band"></div>
                <div class="halo">${icon(13, 20, svg`<path d="M1 1v15l3.500-3.300 2.400 5.600 2.300-1-2.400-5.300H11.500z" fill="#fff" stroke="#222" />`)}</div>
              </article>
            </div>
            <ppt-scrollbar extra .extra=${true} .lead=${26} .size=${15}></ppt-scrollbar>
          </div>
          <div class="notes"><input aria-label="Commentaires" placeholder="Cliquez pour ajouter des commentaires"></div>
        </main>
      </div>
      <footer class="status">
        <span class="where">DIAPOSITIVE 3 DE 32</span><button aria-label="Vérification">${I.proof}</button><span class="lang">FRANÇAIS (FRANCE)</span>
        <div class="right">
          <div class="coms"><button>${I.notes}COMMENTAIRES</button><button>${I.comment}COMMENTAIRES</button></div>
          <button class="view on" aria-label="Normal">${I.normal}</button><button class="view" aria-label="Trieuse">${I.sorter}</button><button class="view" aria-label="Lecture">${I.reading}</button><button class="view" aria-label="Diaporama">${I.slideshow}</button>
          <div class="slider"><button aria-label="Zoom arrière">${icon(7, 2, svg`<path d="M0 1h7" stroke="#fff" stroke-width="2" />`)}</button><input type="range" aria-label="Zoom" min="10" max="190" .value=${String(this.zoom)}><button aria-label="Zoom avant">${icon(8, 8, svg`<path d="M0 4h8M4 0v8" stroke="#fff" stroke-width="2" />`)}</button></div>
          <span class="pct">70 %</span><button aria-label="Ajuster">${I.fit}</button>
        </div>
      </footer>
      <desktop-taskbar></desktop-taskbar>
    `;
  }
}
